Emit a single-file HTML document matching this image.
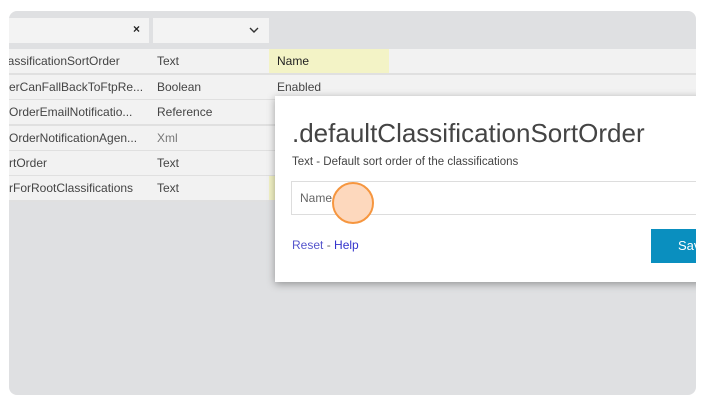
<!DOCTYPE html>
<html><head><style>
body{margin:0;width:706px;height:401px;background:#fff;position:relative;overflow:hidden;font-family:"Liberation Sans",sans-serif;}
.frame{position:absolute;left:9px;top:11px;width:687px;height:384px;background:#dfe0e2;border-radius:8px;overflow:hidden;}
.inp{position:absolute;top:7px;height:25px;background:#f3f3f3;}
.row{position:absolute;left:0;width:687px;height:24px;background:#f2f2f2;border-bottom:2px solid #e0e0e0;font-size:12px;color:#444;line-height:24px;}
.row span{position:absolute;white-space:nowrap;}
.dlg{position:absolute;left:266px;top:85px;width:430px;height:186px;background:#fff;box-shadow:0 2px 8px rgba(0,0,0,.35);}
</style></head><body>
<div class="frame">
<div class="inp" style="left:0;width:140px"><span style="position:absolute;right:9px;top:4px;font-size:12px;font-weight:bold;color:#222">×</span></div>
<div class="inp" style="left:144px;width:116px"><svg style="position:absolute;right:10px;top:9px" width="10" height="7"><path d="M1 1L5 5L9 1" stroke="#333" stroke-width="1.4" fill="none"/></svg></div>
<div class="row" style="top:38px"><span style="left:-4px">lassificationSortOrder</span><span style="left:148px">Text</span><span style="left:260px;width:112px;background:#f3f3c6;height:24px;padding-left:8px;color:#222">Name</span></div>
<div class="row" style="top:64px"><span style="left:0">erCanFallBackToFtpRe...</span><span style="left:148px">Boolean</span><span style="left:268px">Enabled</span></div>
<div class="row" style="top:89px"><span style="left:0">OrderEmailNotificatio...</span><span style="left:148px">Reference</span></div>
<div class="row" style="top:115px"><span style="left:0">OrderNotificationAgen...</span><span style="left:148px;color:#777">Xml</span></div>
<div class="row" style="top:140px"><span style="left:0">rtOrder</span><span style="left:148px">Text</span></div>
<div class="row" style="top:165px"><span style="left:0">rForRootClassifications</span><span style="left:148px">Text</span><span style="left:260px;width:8px;background:#f3f3c6;height:24px"></span></div>
<div class="dlg">
<div style="position:absolute;left:17px;top:22px;font-size:26px;color:#444;font-weight:300;white-space:nowrap">.defaultClassificationSortOrder</div>
<div style="position:absolute;left:17px;top:60px;font-size:11.5px;color:#444;white-space:nowrap">Text - Default sort order of the classifications</div>
<div style="position:absolute;left:16px;top:85px;width:420px;height:32px;border:1px solid #ddd;"><span style="position:absolute;left:8px;top:9px;font-size:12px;color:#666">Name</span></div>
<div style="position:absolute;left:17px;top:142px;font-size:12px;color:#44a"><span style="color:#55c">Reset</span> <span style="color:#666">-</span> <span style="color:#33c">Help</span></div>
<div style="position:absolute;left:376px;top:133px;width:60px;height:34px;background:#0a8fbf;color:#fff;font-size:13px;line-height:34px;padding-left:27px;box-sizing:border-box">Save</div>
</div>
</div>
<div style="position:absolute;left:332px;top:182px;width:38px;height:38px;border-radius:50%;background:#fdd8bd;border:2px solid #f6963f"></div>
</body></html>
